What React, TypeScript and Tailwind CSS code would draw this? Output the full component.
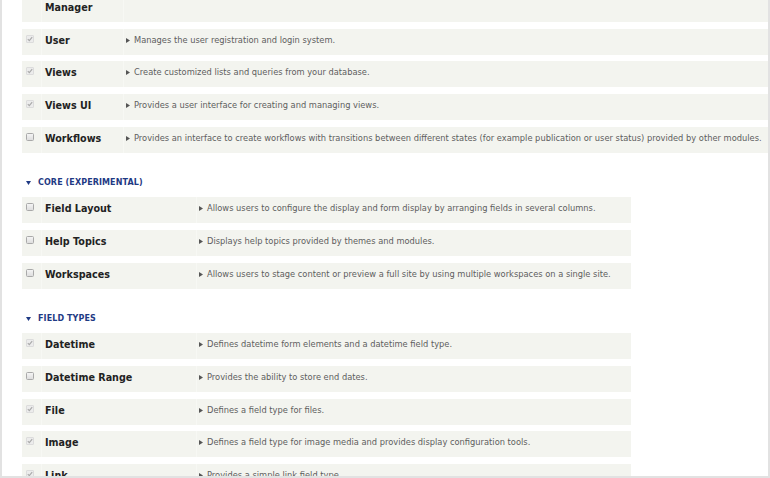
type Mod = { name: string; desc: string; checked: boolean };

type Section = { title?: string; nameW: string; tableW: string; rows: Mod[] };

const sections: Section[] = [
  {
    nameW: "w-[82px]",
    tableW: "w-full",
    rows: [
      {
        name: "Update Manager",
        desc: "Checks for available updates, and can securely install or update modules and themes via a web interface.",
        checked: true,
      },
      { name: "User", desc: "Manages the user registration and login system.", checked: true },
      { name: "Views", desc: "Create customized lists and queries from your database.", checked: true },
      { name: "Views UI", desc: "Provides a user interface for creating and managing views.", checked: true },
      {
        name: "Workflows",
        desc: "Provides an interface to create workflows with transitions between different states (for example publication or user status) provided by other modules.",
        checked: false,
      },
    ],
  },
  {
    title: "Core (Experimental)",
    nameW: "w-[155px]",
    tableW: "w-[609px]",
    rows: [
      {
        name: "Field Layout",
        desc: "Allows users to configure the display and form display by arranging fields in several columns.",
        checked: false,
      },
      { name: "Help Topics", desc: "Displays help topics provided by themes and modules.", checked: false },
      {
        name: "Workspaces",
        desc: "Allows users to stage content or preview a full site by using multiple workspaces on a single site.",
        checked: false,
      },
    ],
  },
  {
    title: "Field Types",
    nameW: "w-[155px]",
    tableW: "w-[609px]",
    rows: [
      { name: "Datetime", desc: "Defines datetime form elements and a datetime field type.", checked: true },
      { name: "Datetime Range", desc: "Provides the ability to store end dates.", checked: false },
      { name: "File", desc: "Defines a field type for files.", checked: true },
      { name: "Image", desc: "Defines a field type for image media and provides display configuration tools.", checked: true },
      { name: "Link", desc: "Provides a simple link field type.", checked: true },
    ],
  },
];

function Checkbox({ checked }: { checked: boolean }) {
  if (checked) {
    return (
      <span className="flex h-[8px] w-[8px] items-center justify-center rounded-[1px] border border-[#dcdcdc] bg-[#ececec]">
        <svg width="6" height="6" viewBox="0 0 6 6">
          <path d="M0.8 3.2 L2.3 4.6 L5.2 1.2" stroke="#a8a8a8" strokeWidth="1.1" fill="none" />
        </svg>
      </span>
    );
  }
  return <span className="block h-[8px] w-[8px] rounded-[1.5px] border border-[#a9a9a9] bg-gradient-to-b from-[#f4f4f4] to-[#dedede]" />;
}

function Row({ mod, nameW }: { mod: Mod; nameW: string }) {
  return (
    <div className="flex min-h-[26px] items-stretch bg-[#f3f4ef]">
      <div className="w-[20px] shrink-0 border-r border-[#f7f8f4] pl-[4px] pt-[6px]">
        <Checkbox checked={mod.checked} />
      </div>
      <div className={`${nameW} shrink-0 border-r border-[#f7f8f4] pb-[8px] pl-[3px] pr-[4px] pt-[5px]`}>
        <span className="block text-[9.6px] font-bold leading-[13px] text-[#222]">{mod.name}</span>
      </div>
      <div className="flex flex-1 items-start gap-[4px] pl-[2px] pt-[5px]">
        <svg width="4" height="13" viewBox="0 0 4 13" className="shrink-0">
          <path d="M0 4 L4 6.5 L0 9 Z" fill="#555" />
        </svg>
        <span className="whitespace-nowrap text-[8.3px] leading-[13px] text-[#5e5e5e]">{mod.desc}</span>
      </div>
    </div>
  );
}

export default function App() {
  return (
    <div className="h-[478px] w-[770px] overflow-hidden border-x-2 border-b-2 border-[#e2e2e2] bg-white font-['DejaVu_Sans',sans-serif]">
      <div className="-mt-[17px] pl-[20px]">
        {sections.map((s, i) => (
          <div key={i}>
            {s.title && (
              <div className="mb-[9px] mt-[25.5px] flex h-[10px] items-center gap-[7px] pl-[4px]">
                <svg width="5" height="4" viewBox="0 0 5 4">
                  <path d="M0 0 L5 0 L2.5 4 Z" fill="#1f3a84" />
                </svg>
                <span className="text-[8px] font-bold uppercase leading-[10px] tracking-[0.1px] text-[#1f3a84]">
                  {s.title}
                </span>
              </div>
            )}
            <div className={`${s.tableW} flex flex-col gap-[6.7px]`}>
              {s.rows.map((m) => (
                <Row key={m.name} mod={m} nameW={s.nameW} />
              ))}
            </div>
          </div>
        ))}
      </div>
    </div>
  );
}
